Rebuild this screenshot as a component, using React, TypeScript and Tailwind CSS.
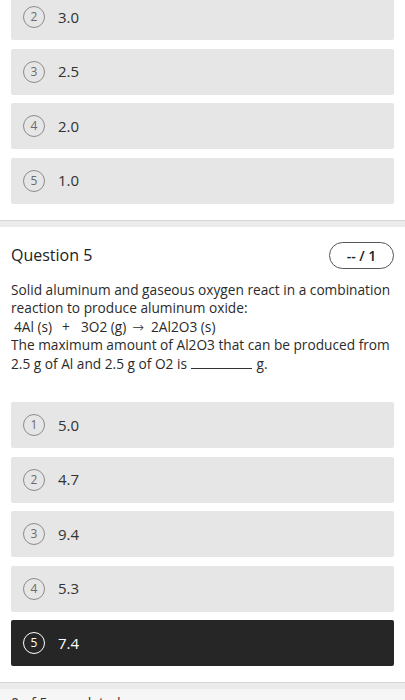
import React from 'react';

type Opt = { n: number; label: string; selected?: boolean };

const prevOptions: Opt[] = [
  { n: 2, label: '3.0' },
  { n: 3, label: '2.5' },
  { n: 4, label: '2.0' },
  { n: 5, label: '1.0' },
];

const q5Options: Opt[] = [
  { n: 1, label: '5.0' },
  { n: 2, label: '4.7' },
  { n: 3, label: '9.4' },
  { n: 4, label: '5.3' },
  { n: 5, label: '7.4', selected: true },
];

function OptionRow({ opt }: { opt: Opt }) {
  return (
    <div
      className={`h-[46px] flex items-center pl-[12px] rounded-[2px] ${
        opt.selected ? 'bg-[#262626] text-white' : 'bg-[#e6e6e6] text-[#333333]'
      }`}
    >
      <span
        className={`w-[22px] h-[22px] rounded-full flex items-center justify-center text-[12px] leading-none ${
          opt.selected ? 'border-[1.5px] border-white text-white' : 'border border-[#8c8c8c] text-[#6b6b6b]'
        }`}
      >
        {opt.n}
      </span>
      <span className="ml-[13px] text-[15px]">{opt.label}</span>
    </div>
  );
}

function Divider() {
  return <div className="border-t border-[#d6d6d6] h-[7px] bg-[#ebebeb]" />;
}

export default function App() {
  return (
    <div className="w-[405px] h-[700px] overflow-hidden bg-white text-[#333333] font-['Open_Sans',sans-serif]">
      {/* tail of previous question */}
      <div className="px-[11px] -mt-[6px] pb-[16px] flex flex-col gap-[8.5px]">
        {prevOptions.map((o) => (
          <OptionRow key={o.n} opt={o} />
        ))}
      </div>

      <Divider />

      {/* Question 5 */}
      <div className="px-[11px] pt-[15px] pb-[16px]">
        <div className="flex items-center justify-between h-[27px]">
          <h2 className="text-[16px] text-[#222222]">Question 5</h2>
          <div className="w-[65px] h-[27px] rounded-full border border-[#555555] flex items-center justify-center text-[14px] font-semibold text-[#222222]">
            -- / 1
          </div>
        </div>

        <div className="mt-[12px] text-[13.7px] leading-[18.5px] text-[#2b2b2b]">
          <p>Solid aluminum and gaseous oxygen react in a combination reaction to produce aluminum oxide:</p>
          <p className="h-[18.5px] pl-[3px] flex items-baseline whitespace-pre">
            <span>4Al (s)</span>
            <span className="ml-[10px]">+</span>
            <span className="ml-[11px]">3O2 (g)</span>
            <span className="ml-[6px] font-['DejaVu_Sans',sans-serif] font-light text-[14px] leading-none">→</span>
            <span className="ml-[7px]">2Al2O3 (s)</span>
          </p>
          <p>
            The maximum amount of Al2O3 that can be produced from 2.5 g of Al and 2.5 g of O2 is{' '}
            <span className="inline-block w-[61px] h-[1px] bg-[#333333] align-baseline" />
            <span className="ml-[5px]">g.</span>
          </p>
        </div>

        <div className="mt-[29px] flex flex-col gap-[8.5px]">
          {q5Options.map((o) => (
            <OptionRow key={o.n} opt={o} />
          ))}
        </div>
      </div>

      <Divider />

      <div className="bg-[#f6f6f6] px-[11px] pt-[3px] text-[14px] text-[#333333]">0 of 5 completed</div>
    </div>
  );
}
